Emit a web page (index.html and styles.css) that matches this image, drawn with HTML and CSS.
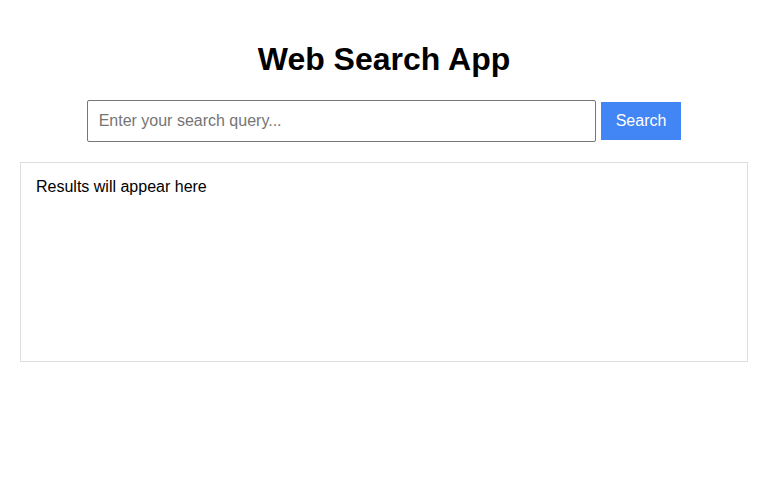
FILE: index.html
```html
<!DOCTYPE html>
<html lang="en">
<head>
<meta charset="utf-8">
<title>Web Search App</title>
<link rel="stylesheet" href="styles.css">
</head>
<body>
<h1 class="title">Web Search App</h1>
<div class="search-row">
  <input class="search-input" type="text" placeholder="Enter your search query...">
  <button class="search-btn" type="button">Search</button>
</div>
<div class="results">Results will appear here</div>
</body>
</html>
```
FILE: styles.css
```css
html, body {
  margin: 0;
  background: #fff;
}
body {
  padding: 20px;
  font-family: "Liberation Sans", Arial, sans-serif;
  color: #000;
}
.title {
  font-size: 32px;
  font-weight: bold;
  text-align: center;
  margin: 21.44px 0;
}
.search-row {
  text-align: center;
  margin-bottom: 20px;
  height: 42px;
  font-size: 16px;
}
.search-input {
  box-sizing: border-box;
  width: 70%;
  height: 42px;
  padding: 10px 11px;
  font-family: "Liberation Sans", Arial, sans-serif;
  font-size: 16px;
  border: 1px solid #767676;
  border-radius: 2px;
  color: #000;
  margin: 0;
  vertical-align: middle;
}
.search-input::placeholder {
  color: #757575;
}
.search-btn {
  box-sizing: border-box;
  height: 38px;
  padding: 0 15px;
  font-family: "Liberation Sans", Arial, sans-serif;
  font-size: 16px;
  background: #4285f4;
  color: #fff;
  border: none;
  border-radius: 0;
  margin: 0;
  vertical-align: middle;
}
.results {
  box-sizing: border-box;
  height: 200px;
  border: 1px solid #ddd;
  padding: 15px;
  font-size: 16px;
}
```
